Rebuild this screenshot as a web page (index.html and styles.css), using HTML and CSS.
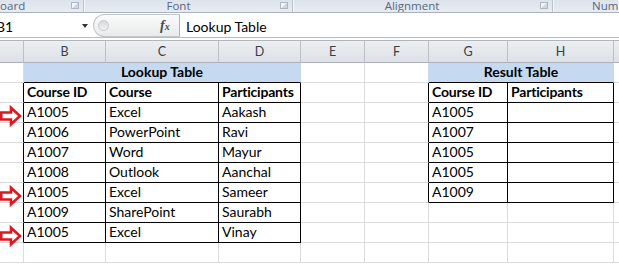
FILE: index.html
```html
<!DOCTYPE html>
<html lang="en">
<head>
  <meta charset="UTF-8" />
  <title>Lookup Table</title>
  <link rel="stylesheet" href="styles.css">
</head>
<body>

<!-- Ribbon group labels (cropped) -->
<div class="ribbon">
  <div class="group g-clip"><span class="label">Clipboard</span><i class="launcher"></i></div>
  <div class="group g-font"><span class="label">Font</span><i class="launcher"></i></div>
  <div class="group g-align"><span class="label">Alignment</span><i class="launcher"></i></div>
  <div class="group g-num"><span class="label">Number</span></div>
</div>

<!-- Formula bar -->
<div class="formula">
  <div class="namebox"><span class="ref">B1</span><i class="drop"></i></div>
  <div class="handle"><i class="grip"></i><span class="fx">f<small>x</small></span></div>
  <div class="input">Lookup Table</div>
</div>

<!-- Worksheet -->
<div class="sheet">
  <div class="c h"></div><div class="c h">B</div><div class="c h">C</div><div class="c h">D</div><div class="c h">E</div><div class="c h">F</div><div class="c h">G</div><div class="c h">H</div><div class="c h"></div>

  <div class="c"></div><div class="c title kb">Lookup Table</div><div class="c"></div><div class="c fb"></div><div class="c title t2 kb">Result Table</div><div class="c"></div>

  <div class="c kr"></div><div class="c k b">Course ID</div><div class="c k b">Course</div><div class="c k b">Participants</div><div class="c"></div><div class="c kr"></div><div class="c k b">Course ID</div><div class="c k b">Participants</div><div class="c"></div>

  <div class="c kr"><svg class="arrow" viewBox="0 0 22 20"><path d="M1.2 6.5H11V1.8L20 10L11 18.2V13.5H1.2Z"/></svg></div><div class="c k">A1005</div><div class="c k">Excel</div><div class="c k">Aakash</div><div class="c"></div><div class="c kr"></div><div class="c k">A1005</div><div class="c k"></div><div class="c"></div>

  <div class="c kr"></div><div class="c k">A1006</div><div class="c k">PowerPoint</div><div class="c k">Ravi</div><div class="c"></div><div class="c kr"></div><div class="c k">A1007</div><div class="c k"></div><div class="c"></div>

  <div class="c kr"></div><div class="c k">A1007</div><div class="c k">Word</div><div class="c k">Mayur</div><div class="c"></div><div class="c kr"></div><div class="c k">A1005</div><div class="c k"></div><div class="c"></div>

  <div class="c kr"></div><div class="c k">A1008</div><div class="c k">Outlook</div><div class="c k">Aanchal</div><div class="c"></div><div class="c kr"></div><div class="c k">A1005</div><div class="c k"></div><div class="c"></div>

  <div class="c kr"><svg class="arrow" viewBox="0 0 22 20"><path d="M1.2 6.5H11V1.8L20 10L11 18.2V13.5H1.2Z"/></svg></div><div class="c k">A1005</div><div class="c k">Excel</div><div class="c k">Sameer</div><div class="c"></div><div class="c kr"></div><div class="c k">A1009</div><div class="c k"></div><div class="c"></div>

  <div class="c kr"></div><div class="c k">A1009</div><div class="c k">SharePoint</div><div class="c k">Saurabh</div><div class="c"></div><div class="c"></div><div class="c"></div><div class="c"></div><div class="c"></div>

  <div class="c kr"><svg class="arrow" viewBox="0 0 22 20"><path d="M1.2 6.5H11V1.8L20 10L11 18.2V13.5H1.2Z"/></svg></div><div class="c k">A1005</div><div class="c k">Excel</div><div class="c k">Vinay</div><div class="c"></div><div class="c"></div><div class="c"></div><div class="c"></div><div class="c"></div>

  <div class="c"></div><div class="c"></div><div class="c"></div><div class="c"></div><div class="c"></div><div class="c"></div><div class="c"></div><div class="c"></div><div class="c"></div>
</div>

</body>
</html>
```

FILE: styles.css
```css
/* Basics */
* {
  box-sizing: border-box;
}
body {
  margin: 0;
  width: 619px;
  height: 268px;
  overflow: hidden;
  background: #fff;
  font-family: Lato, "Liberation Sans", sans-serif;
  color: #000;
}

/* Ribbon labels */
.ribbon {
  display: flex;
  height: 13px;
  background: linear-gradient(#dde3ec, #e8ecf2);
  border-bottom: 1px solid #a9b3c0;
  overflow: hidden;
  font-family: "Open Sans", sans-serif;
  font-size: 11.5px;
  line-height: 11px;
  color: #56677f;
}
.label {
  white-space: nowrap;
}
.group {
  position: relative;
  flex-shrink: 0;
  display: flex;
  justify-content: center;
  border-right: 1px solid #b9c3cf;
  box-shadow: 1px 0 0 #f4f7fa;
  margin-right: 1px;
}
.g-clip { width: 84px; justify-content: flex-start; }
.g-clip .label { margin-left: -27px; }
.g-font { width: 208px; padding-right: 20px; }
.g-align { width: 259px; padding-right: 22px; }
.g-num { flex: 1 1 0; min-width: 0; overflow: hidden; border-right: none; padding-left: 38px; justify-content: flex-start; }
.launcher {
  position: absolute;
  right: 4px;
  top: 2px;
  width: 8px;
  height: 7px;
  border: 1px solid #aeb7c2;
  background: linear-gradient(135deg, #f3f5f8 50%, #cfd6df 50%);
}

/* Formula bar */
.formula {
  display: flex;
  height: 25px;
  border-bottom: 1px solid #b4bbc4;
  margin-bottom: 2px;
}
.namebox {
  position: relative;
  width: 93px;
  font-size: 14px;
  padding-top: 5px;
  overflow: hidden;
}
.ref {
  margin-left: -4px;
}
.drop {
  position: absolute;
  left: 82px;
  top: 11px;
  border-left: 3.5px solid transparent;
  border-right: 3.5px solid transparent;
  border-top: 4px solid #333;
}
.handle {
  position: relative;
  width: 87px;
  margin-top: 1px;
  height: 23px;
  border: 1px solid #c3c6ca;
  border-right-color: #aeb3b9;
  border-radius: 12px 0 0 12px;
  background: linear-gradient(#fbfbfb, #e9eaec);
}
.grip {
  position: absolute;
  left: 4px;
  top: 5px;
  width: 11px;
  height: 11px;
  border-radius: 50%;
  background: linear-gradient(#d8d9db, #f2f2f3);
  border: 1px solid #c8cacd;
}
.fx {
  position: absolute;
  left: 66px;
  top: 3px;
  font-family: "Liberation Serif", serif;
  font-style: italic;
  font-weight: bold;
  font-size: 14px;
  color: #4a4a4a;
}
.fx small {
  font-size: 10px;
}
.input {
  flex: 1;
  padding: 5px 0 0 6px;
  font-size: 14px;
}

/* Worksheet grid */
.sheet {
  display: grid;
  grid-template-columns: 24px 82px 113px 82px 64px 64px 79px 106px 1fr;
  grid-template-rows: 22px;
  grid-auto-rows: 20px;
  border-top: 1px solid #b0b6be;
}
.c {
  position: relative;
  display: flex;
  align-items: flex-end;
  padding: 0 3px 2px;
  border-right: 1px solid #dadcdd;
  border-bottom: 1px solid #dadcdd;
  font-size: 14px;
  line-height: 16px;
  white-space: nowrap;
}
.h {
  align-items: center;
  justify-content: center;
  padding: 0;
  background: linear-gradient(#eceef1, #dde1e6);
  border-right-color: #bcc1c8;
  border-bottom-color: #aab1ba;
  font-size: 12.5px;
  color: #3a3f46;
}
.title {
  grid-column: span 3;
  justify-content: center;
  background: #c5d9f1;
  border-right-color: #c5d9f1;
  font-weight: bold;
}
.title.t2 {
  grid-column: span 2;
}
.fb { border-right-color: #c5d9f1; }
.b { font-weight: bold; letter-spacing: -0.2px; }
.k { border-right-color: #000; border-bottom-color: #000; }
.kr { border-right-color: #000; }
.kb { border-bottom-color: #000; }

/* Red arrows drawn over column A */
.arrow {
  position: absolute;
  left: 0;
  top: 3px;
  width: 22px;
  height: 20px;
  overflow: visible;
  z-index: 2;
}
.arrow path {
  fill: #fff;
  stroke: #e3151d;
  stroke-width: 2.6;
  stroke-linejoin: miter;
}
```
